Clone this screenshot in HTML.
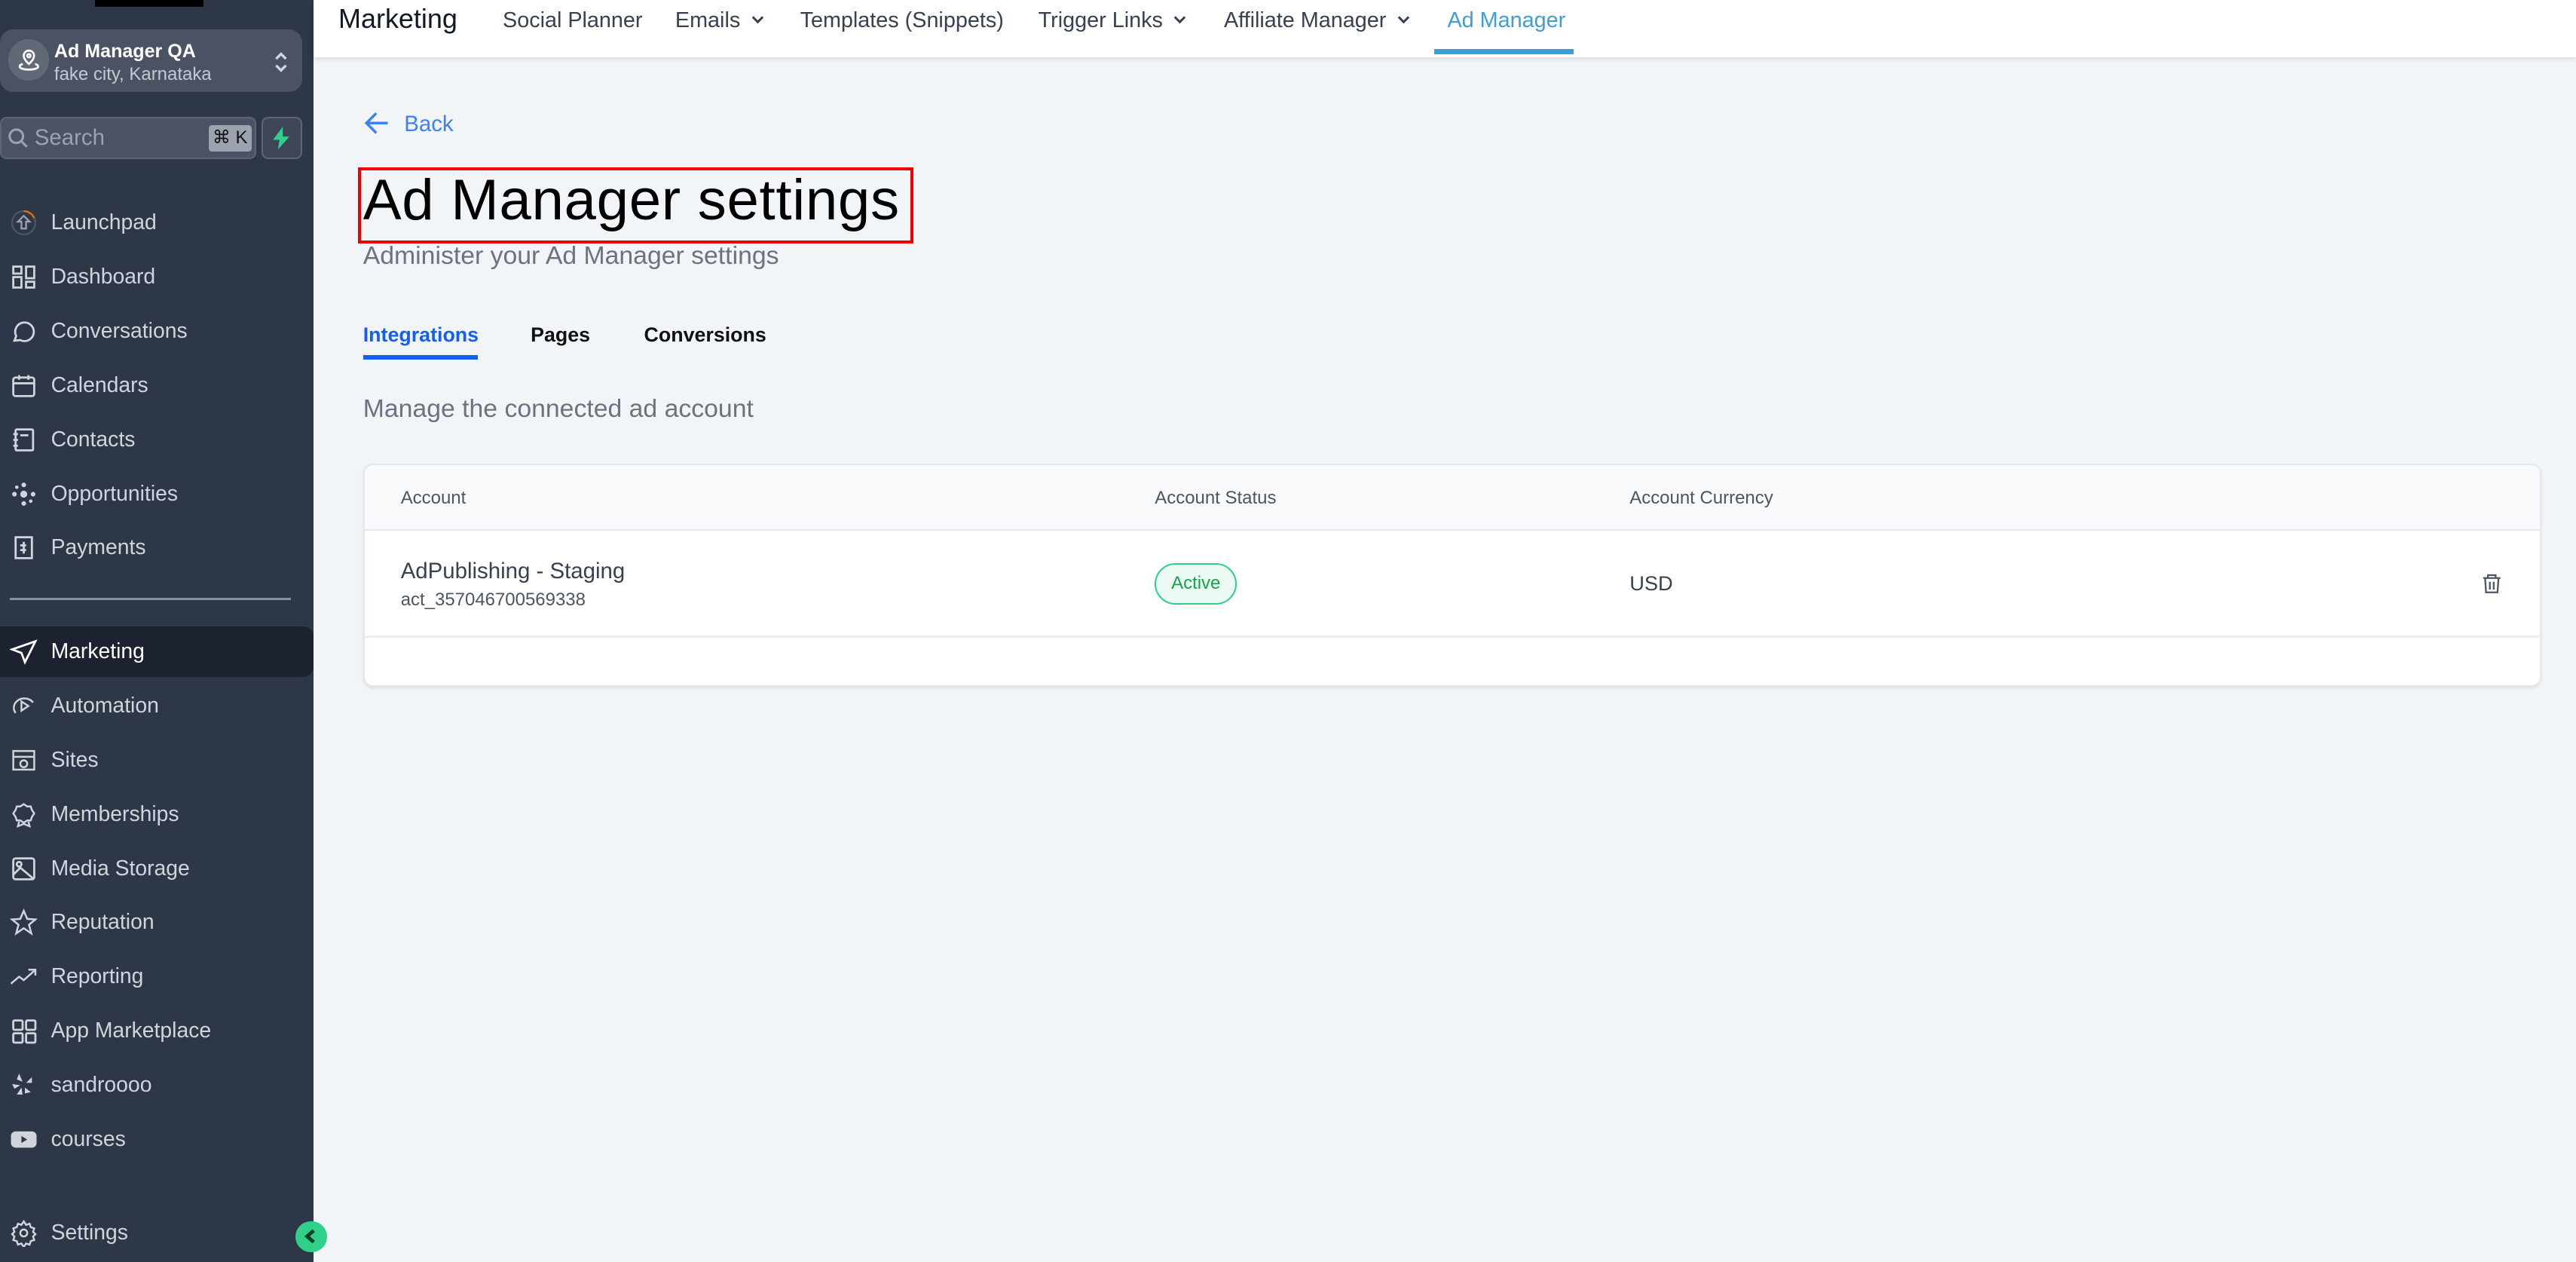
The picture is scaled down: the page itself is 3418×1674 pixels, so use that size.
<!DOCTYPE html>
<html><head><meta charset="utf-8"><style>
*{box-sizing:border-box;margin:0;padding:0}
html,body{width:3418px;height:1674px;overflow:hidden;background:#f1f5f8}
#w{zoom:2.17985;width:1568px;height:768px;position:relative;font-family:"Liberation Sans",sans-serif}
.sb{position:absolute;left:0;top:0;width:191px;height:768px;background:#2e3748}
.ab{position:absolute}
.ni{position:absolute;left:0;width:191px;height:31px;display:flex;align-items:center;color:#d1d5db;font-size:13px}
.ni svg{position:absolute;left:6px;width:17px;height:17px}
.ni span{position:absolute;left:31px}
.top{position:absolute;left:191px;top:0;right:0;height:35px;background:#fff;box-shadow:0 1px 3px rgba(0,0,0,.12)}
.tn{position:absolute;top:5px;font-size:13.2px;color:#374151}
.chev{display:inline-block;width:5px;height:5px;border-right:1.6px solid #374151;border-bottom:1.6px solid #374151;transform:rotate(45deg);margin-left:8px;position:relative;top:-3px}
</style></head><body><div id="w">
<div class="sb">
 <div class="ab" style="left:58px;top:0;width:66px;height:4px;background:#000"></div>
 <div class="ab" style="left:0;top:18px;width:184px;height:38px;background:#4a5263;border-radius:8px"></div>
 <div class="ab" style="left:5px;top:24px;width:25px;height:25px;border-radius:50%;background:#616977"></div>
 <svg class="ab" style="left:10px;top:29px" width="15" height="15" viewBox="0 0 24 24" fill="none" stroke="#fff" stroke-width="2"><path d="M12 3a5 5 0 0 0-5 5c0 4 5 8 5 8s5-4 5-8a5 5 0 0 0-5-5z"/><circle cx="12" cy="8" r="1.6"/><path d="M6 16c-2 .6-3 1.5-3 2.5 0 1.8 4 3 9 3s9-1.2 9-3c0-1-1-1.9-3-2.5"/></svg>
 <div class="ab" style="left:33px;top:25px;color:#fff;font-size:11.5px;font-weight:bold">Ad Manager QA</div>
 <div class="ab" style="left:33px;top:39px;color:#c5c9d0;font-size:11px">fake city, Karnataka</div>
 <svg class="ab" style="left:166px;top:30px" width="10" height="16" viewBox="0 0 10 16" fill="none" stroke="#d1d5db" stroke-width="1.6"><path d="M2 6l3-3 3 3M2 10l3 3 3-3"/></svg>
 <div class="ab" style="left:0;top:71px;width:156px;height:26px;background:#4a5263;border:1px solid #5c6475;border-radius:4px"></div>
 <svg class="ab" style="left:4px;top:77px" width="14" height="14" viewBox="0 0 24 24" fill="none" stroke="#9ca3af" stroke-width="2.4"><circle cx="10" cy="10" r="7"/><path d="M15 15l6 6"/></svg>
 <div class="ab" style="left:21px;top:76px;color:#9ca3af;font-size:13.5px">Search</div>
 <div class="ab" style="left:127px;top:76px;width:26px;height:16px;background:#9ca3af;border-radius:2px;font-size:11px;color:#111;text-align:center;line-height:16px">⌘ K</div>
 <div class="ab" style="left:159px;top:71px;width:25px;height:26px;background:#3d4556;border:1px solid #5c6475;border-radius:4px"></div>
 <svg class="ab" style="left:165px;top:77px" width="12" height="14" viewBox="0 0 12 14"><path d="M7 0L1 8h4l-1 6 7-8H7z" fill="#2fd08a"/></svg>

 <div class="ni" style="top:120px"><svg viewBox="0 0 24 24" fill="none" stroke="#9ca3af" stroke-width="1.5"><circle cx="12" cy="12" r="10" stroke="#4b5563"/><path d="M12 2a10 10 0 0 1 9 6" stroke="#d97706"/><path d="M12 6l-5 5h3v6h4v-6h3z"/></svg><span>Launchpad</span></div>
 <div class="ni" style="top:153px"><svg viewBox="0 0 24 24" fill="none" stroke="#d1d5db" stroke-width="1.8"><rect x="3" y="3" width="7" height="6"/><rect x="14" y="3" width="7" height="10"/><rect x="3" y="12" width="7" height="9"/><rect x="14" y="16" width="7" height="5"/></svg><span>Dashboard</span></div>
 <div class="ni" style="top:186px"><svg viewBox="0 0 24 24" fill="none" stroke="#d1d5db" stroke-width="1.8"><path d="M4 20l1.5-4A8 8 0 1 1 9 19.5z"/></svg><span>Conversations</span></div>
 <div class="ni" style="top:219px"><svg viewBox="0 0 24 24" fill="none" stroke="#d1d5db" stroke-width="1.8"><rect x="3" y="5" width="18" height="16" rx="2"/><path d="M3 10h18M8 3v4M16 3v4"/></svg><span>Calendars</span></div>
 <div class="ni" style="top:252px"><svg viewBox="0 0 24 24" fill="none" stroke="#d1d5db" stroke-width="1.8"><rect x="5" y="3" width="15" height="18" rx="1"/><path d="M3 7h4M3 12h4M3 17h4M9 8h7"/></svg><span>Contacts</span></div>
 <div class="ni" style="top:285px"><svg viewBox="0 0 24 24" fill="#d1d5db"><circle cx="12" cy="12" r="3"/><circle cx="4" cy="12" r="2"/><circle cx="20" cy="12" r="2"/><circle cx="12" cy="4" r="2"/><circle cx="12" cy="20" r="2"/><circle cx="6" cy="6" r="1.5"/><circle cx="18" cy="18" r="1.5"/></svg><span>Opportunities</span></div>
 <div class="ni" style="top:318px"><svg viewBox="0 0 24 24" fill="none" stroke="#d1d5db" stroke-width="1.8"><path d="M5 3h14v18H5zM12 7v10M9 10h5M9 14h5"/></svg><span>Payments</span></div>
 <div class="ab" style="left:6px;top:364px;width:171px;height:1px;background:#8a919e"></div>
 <div class="ab" style="left:0;top:381px;width:191px;height:31px;background:#1c2230;border-radius:0 6px 6px 0"></div>
 <div class="ni" style="top:381px;color:#fff"><svg viewBox="0 0 24 24" fill="none" stroke="#fff" stroke-width="1.8"><path d="M22 3L2 10l8 3 3 8z"/></svg><span>Marketing</span></div>
 <div class="ni" style="top:414px"><svg viewBox="0 0 24 24" fill="none" stroke="#d1d5db" stroke-width="1.6"><path d="M20 9A9 8 0 1 0 5 18"/><path d="M10 8l6 4-6 4z"/></svg><span>Automation</span></div>
 <div class="ni" style="top:447px"><svg viewBox="0 0 24 24" fill="none" stroke="#d1d5db" stroke-width="1.6"><rect x="3" y="4" width="18" height="16"/><path d="M3 9h18"/><circle cx="12" cy="15" r="3"/></svg><span>Sites</span></div>
 <div class="ni" style="top:480px"><svg viewBox="0 0 24 24" fill="none" stroke="#d1d5db" stroke-width="1.6"><path d="M12 3l3 2 3 0 1 3 2 3-2 3-1 3-3 0-3 2-3-2-3 0-1-3-2-3 2-3 1-3 3 0z"/><path d="M8 18l-1 4 5-2 5 2-1-4"/></svg><span>Memberships</span></div>
 <div class="ni" style="top:513px"><svg viewBox="0 0 24 24" fill="none" stroke="#d1d5db" stroke-width="1.8"><rect x="3" y="3" width="18" height="18" rx="2"/><circle cx="8" cy="8" r="2"/><path d="M3 17l6-6 12 10"/></svg><span>Media Storage</span></div>
 <div class="ni" style="top:546px"><svg viewBox="0 0 24 24" fill="none" stroke="#d1d5db" stroke-width="1.6"><path d="M12 2l3 7 7 .5-5.5 4.5 2 7.5L12 17l-6.5 4.5 2-7.5L2 9.5 9 9z"/></svg><span>Reputation</span></div>
 <div class="ni" style="top:579px"><svg viewBox="0 0 24 24" fill="none" stroke="#d1d5db" stroke-width="1.6"><path d="M1 18l7-6 4 3 9-8M16 6h6v5"/></svg><span>Reporting</span></div>
 <div class="ni" style="top:612px"><svg viewBox="0 0 24 24" fill="none" stroke="#d1d5db" stroke-width="1.8"><rect x="3" y="3" width="8" height="8" rx="1"/><rect x="14" y="3" width="8" height="8" rx="1"/><rect x="3" y="14" width="8" height="8" rx="1"/><rect x="14" y="14" width="8" height="8" rx="1"/></svg><span>App Marketplace</span></div>
 <div class="ni" style="top:645px"><svg viewBox="0 0 24 24" fill="#d1d5db"><path d="M8 2l3 7-5-2zM2 11l7 1-5 3zM6 20l4-6 1 6zM13 14l5 4-5 1zM14 10l5-5 0 5z"/></svg><span>sandroooo</span></div>
 <div class="ni" style="top:678px"><svg viewBox="0 0 24 24"><rect x="1" y="5" width="22" height="14" rx="4" fill="#d1d5db"/><path d="M10 9l5 3-5 3z" fill="#2e3748"/></svg><span>courses</span></div>
 <div class="ni" style="top:735px"><svg viewBox="0 0 24 24" fill="none" stroke="#d1d5db" stroke-width="1.6"><circle cx="12" cy="12" r="3"/><path d="M12 2l2 3 3-1 1 3 3 1-1 3 2 2-2 2 1 3-3 1-1 3-3-1-2 3-2-3-3 1-1-3-3-1 1-3-2-2 2-2-1-3 3-1 1-3 3 1z"/></svg><span>Settings</span></div>
</div>
<div class="ab" style="left:180px;top:743px;width:19px;height:19px;border-radius:50%;background:#2fd08a"></div>
<svg class="ab" style="left:184px;top:747px" width="11" height="11" viewBox="0 0 11 11" fill="none" stroke="#0f3d2a" stroke-width="2.2"><path d="M7 2L3 5.5 7 9"/></svg>

<div class="top">
 <div class="tn" style="left:15px;top:2px;font-size:16.5px;color:#111827">Marketing</div>
 <div class="tn" style="left:115px">Social Planner</div>
 <div class="tn" style="left:220px">Emails<i class="chev"></i></div>
 <div class="tn" style="left:296px">Templates (Snippets)</div>
 <div class="tn" style="left:441px">Trigger Links<i class="chev"></i></div>
 <div class="tn" style="left:554px">Affiliate Manager<i class="chev"></i></div>
 <div class="tn" style="left:690px;color:#3b9fd8">Ad Manager</div>
 <div class="ab" style="left:682px;top:30px;width:85px;height:3px;background:#3b9fd8"></div>
</div>

<svg class="ab" style="left:222px;top:68px" width="15" height="14" viewBox="0 0 15 14" fill="none" stroke="#3b82f6" stroke-width="1.6"><path d="M14 7H2M7 1L1 7l6 6"/></svg>
<div class="ab" style="left:246px;top:68px;color:#3b82f6;font-size:13.5px">Back</div>
<div class="ab" style="left:218px;top:102px;width:338px;height:46px;border:2px solid #e00"></div>
<div class="ab" style="left:221px;top:100px;font-size:35px;letter-spacing:0.3px;color:#000;line-height:44px">Ad Manager settings</div>
<div class="ab" style="left:221px;top:147px;font-size:15.5px;color:#6b7280">Administer your Ad Manager settings</div>
<div class="ab" style="left:221px;top:197px;font-size:12.3px;font-weight:bold;color:#155eef">Integrations</div>
<div class="ab" style="left:221px;top:216px;width:70px;height:3px;background:#155eef"></div>
<div class="ab" style="left:323px;top:197px;font-size:12.3px;font-weight:bold;color:#111">Pages</div>
<div class="ab" style="left:392px;top:197px;font-size:12.3px;font-weight:bold;color:#111">Conversions</div>
<div class="ab" style="left:221px;top:240px;font-size:15.5px;color:#6b7280">Manage the connected ad account</div>

<div class="ab" style="left:221px;top:282px;width:1326px;height:136px;background:#fff;border:1px solid #e5e7eb;border-radius:6px;box-shadow:0 1px 2px rgba(0,0,0,.08);overflow:hidden">
 <div class="ab" style="left:0;top:0;width:100%;height:40px;background:#f9fafb;border-bottom:1px solid #e5e7eb"></div>
 <div class="ab" style="left:22px;top:14px;font-size:11px;color:#4b5563">Account</div>
 <div class="ab" style="left:481px;top:14px;font-size:11px;color:#4b5563">Account Status</div>
 <div class="ab" style="left:770px;top:14px;font-size:11px;color:#4b5563">Account Currency</div>
 <div class="ab" style="left:22px;top:57px;font-size:13.5px;color:#374151">AdPublishing - Staging</div>
 <div class="ab" style="left:22px;top:76px;font-size:11px;color:#4b5563">act_357046700569338</div>
 <div class="ab" style="left:481px;top:60px;width:50px;height:25px;border:1px solid #2fd08a;border-radius:13px;background:#ebfaf2;color:#16a34a;font-size:11px;text-align:center;line-height:23px">Active</div>
 <div class="ab" style="left:770px;top:65px;font-size:12.5px;color:#374151">USD</div>
 <svg class="ab" style="left:1288px;top:65px" width="14" height="15" viewBox="0 0 24 24" fill="none" stroke="#4b5563" stroke-width="1.8"><path d="M3 6h18M8 6V3h8v3M5 6l1 15h12l1-15M10 10v8M14 10v8"/></svg>
 <div class="ab" style="left:0;top:104px;width:100%;height:1px;background:#eceef1"></div>
</div>
</div></body></html>
